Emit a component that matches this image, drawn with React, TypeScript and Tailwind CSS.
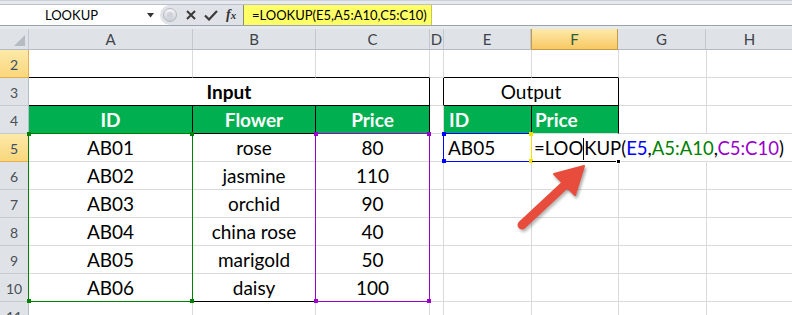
import * as React from "react";
import { clsx, type ClassValue } from "clsx";
import { twMerge } from "tailwind-merge";

const cn = (...a: ClassValue[]) => twMerge(clsx(a));

/* column widths A..H */
const W = {
  A: "w-[164px]",
  B: "w-[123px]",
  C: "w-[114px]",
  D: "w-[14px]",
  E: "w-[88px]",
  F: "w-[87px]",
  G: "w-[88px]",
  H: "w-[88px]",
};

const flowers: [string, string, string][] = [
  ["AB01", "rose", "80"],
  ["AB02", "jasmine", "110"],
  ["AB03", "orchid", "90"],
  ["AB04", "china rose", "40"],
  ["AB05", "marigold", "50"],
  ["AB06", "daisy", "100"],
];

function Cell({
  w,
  className,
  children,
}: {
  w: string;
  className?: string;
  children?: React.ReactNode;
}) {
  return (
    <div
      className={cn(
        "h-full shrink-0 flex items-center justify-center pt-[2px] whitespace-nowrap border-r border-b border-r-[#dadada] border-b-[#dadada] text-[19px] text-black",
        w,
        className
      )}
    >
      {children}
    </div>
  );
}

function RowHead({ n, selected }: { n: number; selected?: boolean }) {
  return (
    <div
      className={cn(
        "h-full w-[29px] shrink-0 flex items-center justify-center pt-[1px] border-r border-b text-[14px]",
        selected
          ? "bg-gradient-to-b from-[#fde9a8] to-[#f9d77c] border-r-[#e2b04c] border-b-[#e2b04c] text-[#3b4f66]"
          : "bg-[#dfe3e8] border-r-[#b6bcc4] border-b-[#c6cbd2] text-[#4a4f57]"
      )}
    >
      {n}
    </div>
  );
}

function ColHead({ w, label, selected }: { w: string; label: string; selected?: boolean }) {
  return (
    <div
      className={cn(
        "h-full shrink-0 flex items-center justify-center pt-[1px] border-r border-b text-[15px]",
        w,
        selected
          ? "bg-gradient-to-b from-[#fdeaa9] to-[#f8c862] border-r-[#c79a48] border-b-[#c79a48] border-l border-l-[#c79a48] text-[#2f5b33]"
          : "bg-[#dfe3e8] border-r-[#c2c8cf] border-b-[#b3bac3] text-[#3d4249]"
      )}
    >
      {label}
    </div>
  );
}

function Corners({ color }: { color: string }) {
  const sq = cn("absolute w-[4px] h-[4px]", color);
  return (
    <>
      <span className={cn(sq, "-left-[2px] -top-[2px]")} />
      <span className={cn(sq, "-right-[2px] -top-[2px]")} />
      <span className={cn(sq, "-left-[2px] -bottom-[2px]")} />
      <span className={cn(sq, "-right-[2px] -bottom-[2px]")} />
    </>
  );
}

function FormulaBar() {
  return (
    <div className="h-[29px] bg-[#e6e9ee] border-t border-[#cdd2d9] pt-[3px] pb-[3px]">
      <div className="h-[22px] flex bg-white border-t border-b border-t-[#b9c0c9] border-b-[#9aa2ad]">
        {/* name box */}
        <div className="w-[160px] flex items-center pt-[1px]">
          <div className="w-[143px] text-center text-[13px] text-black">LOOKUP</div>
          <svg width="8" height="5" viewBox="0 0 8 5" className="ml-[4px]">
            <path d="M0 0h7L3.5 4.5z" fill="#333" />
          </svg>
        </div>
        {/* buttons */}
        <div className="w-[84px] flex items-center bg-[#dfe3e8] rounded-l-[11px] border-r border-[#8c8f63]">
          <span className="ml-[3px] w-[14px] h-[14px] rounded-full bg-gradient-to-b from-[#f4f5f7] to-[#c9ced5] border border-[#b4bac2] flex items-center justify-center">
            <span className="w-[6px] h-[6px] rounded-full bg-[#cfd3d9]" />
          </span>
          <svg width="10" height="10" viewBox="0 0 10 10" className="ml-[9px]">
            <path d="M1 1l8 8M9 1l-8 8" stroke="#3a3a3a" strokeWidth="2" />
          </svg>
          <svg width="14" height="11" viewBox="0 0 14 11" className="ml-[8px]">
            <path d="M1 5.5l4 4L13 1" stroke="#3a3a3a" strokeWidth="2.2" fill="none" />
          </svg>
          <span className="ml-[8px] font-['Liberation_Serif',serif] italic font-bold text-[14px] text-[#333] leading-none">
            f<span className="text-[11px]">x</span>
          </span>
        </div>
        {/* formula */}
        <div className="w-[188px] flex items-center pt-[1px] bg-[#ffff66] border-r border-[#c8c84a] pl-[8px] text-[13px] text-black">
          =LOOKUP(E5,A5:A10,C5:C10)
        </div>
        <div className="flex-1" />
      </div>
    </div>
  );
}

function Arrow() {
  const shape = (
    <>
      <path d="M522 225L566 184" strokeWidth="9" strokeLinecap="round" />
      <path d="M584 166L554 174L575 195Z" strokeWidth="2" strokeLinejoin="round" />
    </>
  );
  return (
    <svg
      className="absolute left-0 top-0 pointer-events-none"
      width="792"
      height="315"
      viewBox="0 0 792 315"
    >
      <defs>
        <filter id="blur" x="-20%" y="-20%" width="140%" height="140%">
          <feGaussianBlur stdDeviation="1.5" />
        </filter>
      </defs>
      <g
        transform="translate(1.5 2.5)"
        stroke="rgba(0,0,0,0.28)"
        fill="rgba(0,0,0,0.28)"
        filter="url(#blur)"
      >
        {shape}
      </g>
      <g stroke="#e74c3c" fill="#e74c3c">
        {shape}
      </g>
    </svg>
  );
}

export default function App() {
  const green = "bg-[#00b050] text-white font-bold";
  return (
    <div className="relative w-[792px] h-[315px] overflow-hidden bg-white font-['Lato',sans-serif]">
      <FormulaBar />

      {/* column headers */}
      <div className="flex h-[21px]">
        <div className="w-[29px] h-full shrink-0 bg-[#dfe3e8] border-r border-b border-r-[#c2c8cf] border-b-[#b3bac3] flex items-end justify-end p-[3px]">
          <svg width="11" height="11" viewBox="0 0 11 11">
            <path d="M11 0V11H0Z" fill="#b5bbc3" />
          </svg>
        </div>
        <ColHead w={W.A} label="A" />
        <ColHead w={W.B} label="B" />
        <ColHead w={W.C} label="C" />
        <ColHead w={W.D} label="D" />
        <ColHead w="w-[87px]" label="E" />
        <ColHead w={W.F} label="F" selected />
        <ColHead w={W.G} label="G" />
        <ColHead w={W.H} label="H" />
      </div>

      {/* row 2 */}
      <div className="flex h-[28px]">
        <RowHead n={2} selected />
        <Cell w={W.A} className="border-b-black" />
        <Cell w={W.B} className="border-b-black" />
        <Cell w={W.C} className="border-b-black" />
        <Cell w={W.D} />
        <Cell w={W.E} className="border-b-black" />
        <Cell w={W.F} className="border-b-black" />
        <Cell w={W.G} />
        <Cell w={W.H} />
      </div>

      {/* row 3 */}
      <div className="flex h-[28px]">
        <RowHead n={3} />
        <Cell w="w-[401px]" className="border-r-black border-b-black font-bold">
          Input
        </Cell>
        <Cell w={W.D} className="border-r-black" />
        <Cell w="w-[175px]" className="border-r-black border-b-black">
          Output
        </Cell>
        <Cell w={W.G} />
        <Cell w={W.H} />
      </div>

      {/* row 4 */}
      <div className="flex h-[28px]">
        <RowHead n={4} />
        <Cell w={W.A} className={cn(green, "border-r-black")}>ID</Cell>
        <Cell w={W.B} className={cn(green, "border-r-black border-b-black")}>Flower</Cell>
        <Cell w={W.C} className={cn(green, "border-r-black")}>Price</Cell>
        <Cell w={W.D} />
        <Cell w={W.E} className={cn(green, "border-r-black justify-start pl-[5px]")}>ID</Cell>
        <Cell w={W.F} className={cn(green, "border-r-black justify-start pl-[3px]")}>Price</Cell>
        <Cell w={W.G} />
        <Cell w={W.H} />
      </div>

      {/* rows 5-10 */}
      {flowers.map(([id, name, price], i) => {
        const n = i + 5;
        const last = n === 10;
        return (
          <div key={id} className="flex h-[28px]">
            <RowHead n={n} selected={n === 5} />
            <Cell w={W.A}>{id}</Cell>
            <Cell w={W.B} className={last ? "border-b-black" : ""}>
              {name}
            </Cell>
            <Cell w={W.C}>{price}</Cell>
            <Cell w={W.D} />
            {n === 5 ? (
              <>
                <Cell w={W.E} className="justify-start pl-[4px]">
                  AB05
                </Cell>
                <Cell w={W.F} className="relative z-10 justify-start pl-[2px] text-[18.5px] overflow-visible border-r-transparent border-b-black">
                  <span>
                    =LOO
                    <span className="inline-block w-px h-[22px] bg-black align-[-5px]" />
                    KUP(<span className="text-[#0000ff]">E5</span>,
                    <span className="text-[#008000]">A5:A10</span>,
                    <span className="text-[#9900cc]">C5:C10</span>)
                  </span>
                  <span className="absolute -right-[3px] -bottom-[3px] w-[5px] h-[5px] bg-black border border-white" />
                </Cell>
                <Cell w={W.G} className="border-r-transparent" />
                <Cell w={W.H} className="border-r-transparent" />
              </>
            ) : (
              <>
                <Cell w={W.E} />
                <Cell w={W.F} />
                <Cell w={W.G} />
                <Cell w={W.H} />
              </>
            )}
          </div>
        );
      })}

      {/* row 11 */}
      <div className="flex h-[28px]">
        <RowHead n={11} />
        <Cell w={W.A} />
        <Cell w={W.B} />
        <Cell w={W.C} />
        <Cell w={W.D} />
        <Cell w={W.E} />
        <Cell w={W.F} />
        <Cell w={W.G} />
        <Cell w={W.H} />
      </div>

      {/* formula range highlights */}
      <div className="absolute left-[28px] top-[133px] w-[165px] h-[169px] border border-[#008000] pointer-events-none">
        <Corners color="bg-[#008000]" />
      </div>
      <div className="absolute left-[315px] top-[133px] w-[115px] h-[169px] border border-[#9900cc] pointer-events-none">
        <Corners color="bg-[#9900cc]" />
      </div>
      <div className="absolute left-[443px] top-[133px] w-[89px] h-[29px] border border-[#0000ff] border-r-[#f2e200] pointer-events-none">
        <span className="absolute -left-[2px] -top-[2px] w-[4px] h-[4px] bg-[#0000ff]" />
        <span className="absolute -left-[2px] -bottom-[2px] w-[4px] h-[4px] bg-[#0000ff]" />
        <span className="absolute -right-[2px] -top-[2px] w-[4px] h-[4px] bg-[#f2e200]" />
        <span className="absolute -right-[2px] -bottom-[2px] w-[4px] h-[4px] bg-[#f2e200]" />
      </div>

      <Arrow />
    </div>
  );
}
